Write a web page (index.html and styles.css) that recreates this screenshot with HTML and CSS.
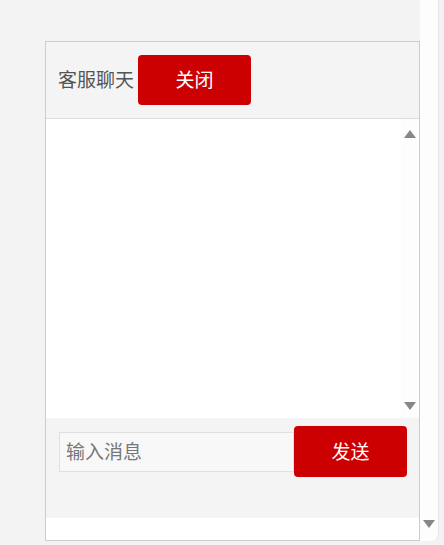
FILE: index.html
```html
<!DOCTYPE html>
<html lang="zh-CN">
<head>
<meta charset="utf-8">
<title>客服聊天</title>
<link rel="stylesheet" href="styles.css">
</head>
<body>
<div class="page">
  <main class="main">
    <section class="chat">
      <header class="chat-head">
        <span class="chat-title">客服聊天</span>
        <button class="btn btn-close">关闭</button>
      </header>
      <div class="chat-body">
        <div class="messages"></div>
        <div class="scroll">
          <svg class="arrow" width="12" height="8" viewBox="0 0 12 8"><path d="M6 0 L12 8 L0 8 Z" fill="#878787"/></svg>
          <svg class="arrow" width="12" height="8" viewBox="0 0 12 8"><path d="M0 0 L12 0 L6 8 Z" fill="#878787"/></svg>
        </div>
      </div>
      <div class="chat-input">
        <input class="msg-input" type="text" placeholder="输入消息">
        <button class="btn btn-send">发送</button>
      </div>
      <div class="chat-foot"></div>
    </section>
  </main>
  <aside class="page-scroll">
    <svg class="arrow" width="12" height="8" viewBox="0 0 12 8"><path d="M0 0 L12 0 L6 8 Z" fill="#878787"/></svg>
  </aside>
</div>
</body>
</html>
```

FILE: styles.css
```css
* { box-sizing: border-box; }
html, body { margin: 0; padding: 0; }
body {
  background: #f3f3f3;
  font-family: "Microsoft YaHei", "Noto Sans CJK SC", "Noto Sans", sans-serif;
  width: 444px;
  height: 545px;
  overflow: hidden;
}
.page {
  display: flex;
  height: 545px;
}
.main {
  width: 420px;
  padding: 41px 0 0 45px;
}
.chat {
  width: 375px;
  height: 500px;
  border: 1px solid #cccccc;
  background: #ffffff;
  display: flex;
  flex-direction: column;
}
.chat-head {
  height: 77px;
  flex: none;
  background: #f4f4f4;
  border-bottom: 1px solid #dcdcdc;
  display: flex;
  align-items: center;
  padding-left: 12px;
  gap: 4px;
}
.chat-title {
  font-size: 19px;
  color: #555555;
  margin-bottom: 3px;
}
.btn {
  border: none;
  background: #cc0000;
  color: #ffffff;
  border-radius: 4px;
  font-family: inherit;
  font-size: 19px;
  cursor: pointer;
  padding: 0 0 3px;
}
.btn-close {
  width: 113px;
  height: 50px;
}
.chat-body {
  height: 299px;
  flex: none;
  display: flex;
  background: #ffffff;
}
.messages { flex: 1; }
.scroll {
  width: 18px;
  background: #fdfdfd;
  display: flex;
  flex-direction: column;
  justify-content: space-between;
  align-items: center;
  padding: 11px 0 8px;
}
.arrow { display: block; }
.chat-input {
  height: 100px;
  flex: none;
  background: #f4f4f4;
  display: flex;
  align-items: flex-start;
  padding: 8px 11px 0 13px;
}
.msg-input {
  width: 235px;
  height: 40px;
  margin-top: 6px;
  border: 1px solid #e0e0e0;
  background: #f8f8f8;
  font-family: inherit;
  font-size: 19px;
  color: #333;
  padding: 0 6px 3px;
  outline: none;
}
.msg-input::placeholder { color: #777777; }
.btn-send {
  width: 113px;
  height: 51px;
}
.chat-foot {
  flex: 1;
  background: #ffffff;
}
.page-scroll {
  width: 19px;
  height: 541px;
  background: #fdfdfd;
  border-right: 1px solid #e6e6e6;
  border-bottom-right-radius: 7px;
  display: flex;
  flex-direction: column;
  justify-content: flex-end;
  align-items: center;
  padding-bottom: 13px;
}
```
